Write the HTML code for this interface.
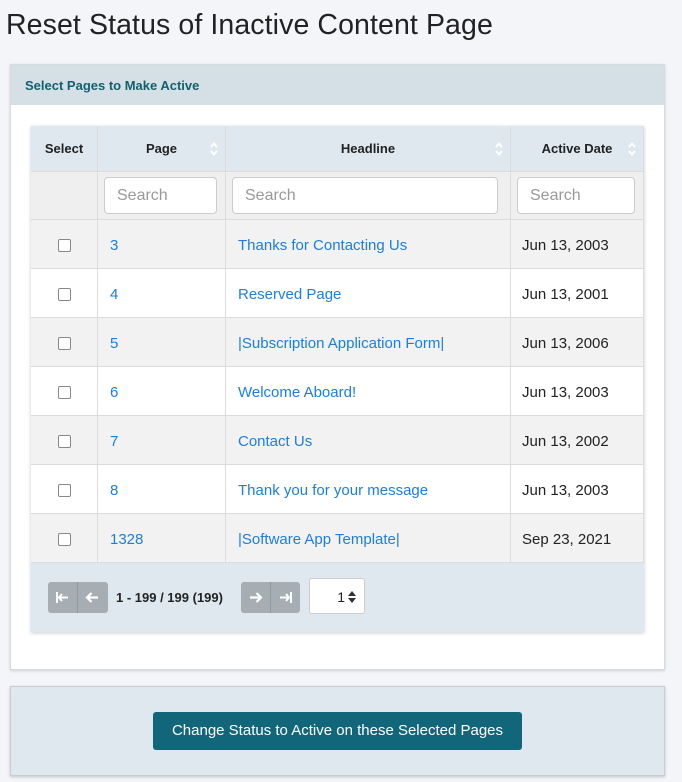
<!DOCTYPE html>
<html><head><style>
body{margin:0;background:#f3f5f9;font-family:"Liberation Sans",sans-serif;width:682px;height:782px;overflow:hidden;position:relative}
h1{position:absolute;left:6px;top:9px;margin:0;font-size:28.5px;font-weight:normal;color:#222;letter-spacing:0.1px}
.card{position:absolute;left:10px;top:64px;width:653px;height:604px;background:#fff;border:1px solid #d6dbe0;box-shadow:0 1px 3px rgba(0,0,0,.15)}
.ch{height:40px;background:#d4e0e6;color:#145f6e;font-weight:bold;font-size:13px;line-height:42px;padding-left:14px}
.tbl{position:absolute;left:20px;top:61px;width:613px;box-shadow:0 1px 4px rgba(0,0,0,.2)}
table{border-collapse:collapse;width:613px;font-size:15px}
td,th{border-right:1px solid #dcdcdc;border-bottom:1px solid #dcdcdc;padding:0}
th{background:#dee8ee;height:45px;font-size:13px;color:#222;position:relative}
th svg{position:absolute;right:6px;top:15px}
.f td{background:#efefef;height:47px}
input{box-sizing:border-box;height:37px;border:1px solid #ccc;border-radius:4px;font-size:16px;padding-left:12px;font-family:inherit;color:#999}
tr.r td{height:46px;padding-top:2px}
tr.r:nth-child(odd) td{background:#f2f2f2}
tr.r:nth-child(even) td{background:#fff}
a{color:#1a7fe0;text-decoration:none}
.cb{width:11px;height:11px;border:1px solid #888;border-radius:2px;margin:auto;background:#fff}
.pg{height:69px;background:#dee8ee;position:relative}
.bt{position:absolute;top:19px;height:31px;background:#a6adb3;border-radius:3px}
.bt span{display:inline-block;width:29px;height:31px;vertical-align:top}
.card2{position:absolute;left:10px;top:686px;width:653px;height:88px;background:#dee8ee;border:1px solid #c8cdd2;box-shadow:0 1px 3px rgba(0,0,0,.2)}
.btn{position:absolute;left:142px;top:25px;width:369px;height:38px;background:#12667a;color:#fff;border-radius:3px;font-size:15px;line-height:38px;text-align:center}
</style></head><body>
<h1>Reset Status of Inactive Content Page</h1>
<div class="card"><div class="ch">Select Pages to Make Active</div>
<div class="tbl"><table>
<tr><th style="width:66px">Select</th>
<th style="width:127px">Page<svg width="10" height="16" viewBox="0 0 10 16"><path d="M2 6L5 2.5 8 6M2 10L5 13.5 8 10" fill="none" stroke="#fff" stroke-width="2"/></svg></th>
<th style="width:284px">Headline<svg width="10" height="16" viewBox="0 0 10 16"><path d="M2 6L5 2.5 8 6M2 10L5 13.5 8 10" fill="none" stroke="#fff" stroke-width="2"/></svg></th>
<th>Active Date<svg width="10" height="16" viewBox="0 0 10 16"><path d="M2 6L5 2.5 8 6M2 10L5 13.5 8 10" fill="none" stroke="#fff" stroke-width="2"/></svg></th></tr>
<tr class="f"><td></td><td><input style="width:113px;margin-left:6px" value="Search"></td><td><input style="width:266px;margin-left:6px" value="Search"></td><td><input style="width:118px;margin-left:6px" value="Search"></td></tr>
<tr class="r"><td><div class="cb"></div></td><td style="padding-left:12px"><a>3</a></td><td style="padding-left:12px"><a>Thanks for Contacting Us</a></td><td style="padding-left:11px;color:#222">Jun 13, 2003</td></tr>
<tr class="r"><td><div class="cb"></div></td><td style="padding-left:12px"><a>4</a></td><td style="padding-left:12px"><a>Reserved Page</a></td><td style="padding-left:11px;color:#222">Jun 13, 2001</td></tr>
<tr class="r"><td><div class="cb"></div></td><td style="padding-left:12px"><a>5</a></td><td style="padding-left:12px"><a>|Subscription Application Form|</a></td><td style="padding-left:11px;color:#222">Jun 13, 2006</td></tr>
<tr class="r"><td><div class="cb"></div></td><td style="padding-left:12px"><a>6</a></td><td style="padding-left:12px"><a>Welcome Aboard!</a></td><td style="padding-left:11px;color:#222">Jun 13, 2003</td></tr>
<tr class="r"><td><div class="cb"></div></td><td style="padding-left:12px"><a>7</a></td><td style="padding-left:12px"><a>Contact Us</a></td><td style="padding-left:11px;color:#222">Jun 13, 2002</td></tr>
<tr class="r"><td><div class="cb"></div></td><td style="padding-left:12px"><a>8</a></td><td style="padding-left:12px"><a>Thank you for your message</a></td><td style="padding-left:11px;color:#222">Jun 13, 2003</td></tr>
<tr class="r"><td><div class="cb"></div></td><td style="padding-left:12px"><a>1328</a></td><td style="padding-left:12px"><a>|Software App Template|</a></td><td style="padding-left:11px;color:#222">Sep 23, 2021</td></tr>
</table>
<div class="pg">
<div class="bt" style="left:17px;width:60px"><span style="border-right:1px solid #939a9f"><svg width="29" height="31"><path d="M9 10v11M20 15.5h-9M14 12l-3 3.5 3 3.5" fill="none" stroke="#fff" stroke-width="2"/></svg></span><span><svg width="29" height="31"><path d="M20 15.5H9M13.5 11L9 15.5l4.5 4.5" fill="none" stroke="#fff" stroke-width="2.2"/></svg></span></div>
<div style="position:absolute;left:85px;top:27px;font-size:13px;font-weight:bold;color:#222">1 - 199 / 199 (199)</div>
<div class="bt" style="left:210px;width:59px"><span style="border-right:1px solid #939a9f"><svg width="29" height="31"><path d="M9 15.5h11M15.5 11l4.5 4.5-4.5 4.5" fill="none" stroke="#fff" stroke-width="2.2"/></svg></span><span><svg width="29" height="31"><path d="M20 10v11M9 15.5h9M15 12l3 3.5-3 3.5" fill="none" stroke="#fff" stroke-width="2"/></svg></span></div>
<div style="position:absolute;left:278px;top:15px;width:56px;height:36px;background:#fff;border:1px solid #ccc;border-radius:3px;box-sizing:border-box;color:#222">
<span style="position:absolute;right:19px;top:10px;font-size:14px">1</span>
<svg style="position:absolute;right:8px;top:11px" width="8" height="14"><path d="M0 6L4 1 8 6zM0 8l4 5 4-5z" fill="#333"/></svg></div>
</div></div></div>
<div class="card2"><div class="btn">Change Status to Active on these Selected Pages</div></div>
</body></html>
